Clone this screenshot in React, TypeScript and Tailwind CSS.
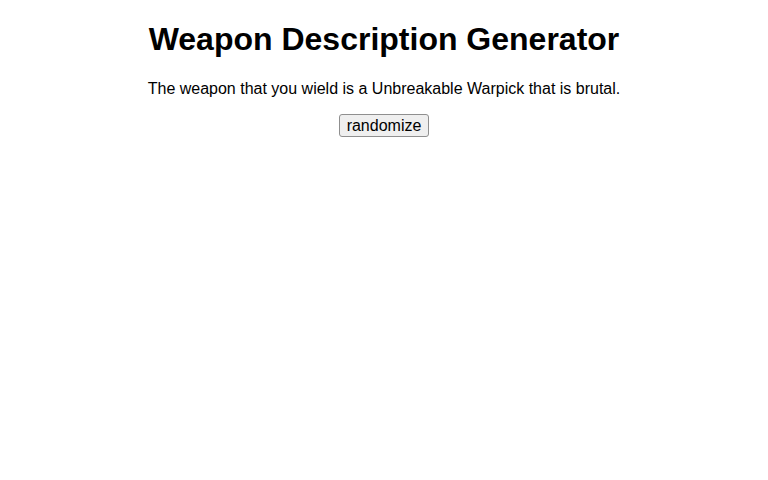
import { useState } from 'react';

const adjectives = ['Unbreakable', 'Cursed', 'Gleaming', 'Ancient', 'Rusty'];
const weapons = ['Warpick', 'Longsword', 'Halberd', 'Crossbow', 'Flail'];
const traits = ['brutal', 'elegant', 'whispering', 'heavy', 'swift'];

const pick = (list: string[]) => list[Math.floor(Math.random() * list.length)];

export default function App() {
  const [weapon, setWeapon] = useState({ adj: 'Unbreakable', name: 'Warpick', trait: 'brutal' });

  const randomize = () => setWeapon({ adj: pick(adjectives), name: pick(weapons), trait: pick(traits) });

  return (
    <div className="min-h-[480px] bg-white text-center font-['Liberation_Sans',Arial,sans-serif] text-black">
      <h1 className="pt-[21px] text-[32px] font-bold leading-[37px]">Weapon Description Generator</h1>
      <p className="mt-[22px] text-base leading-[18px]">
        The weapon that you wield is a {weapon.adj} {weapon.name} that is {weapon.trait}.
      </p>
      <button
        onClick={randomize}
        className="mt-[16px] rounded-[3px] border border-[#8f8f8f] bg-[#efefef] px-[7px] pt-[2px] pb-[1px] text-base leading-[18px] hover:bg-[#e5e5e5]"
      >
        randomize
      </button>
    </div>
  );
}
